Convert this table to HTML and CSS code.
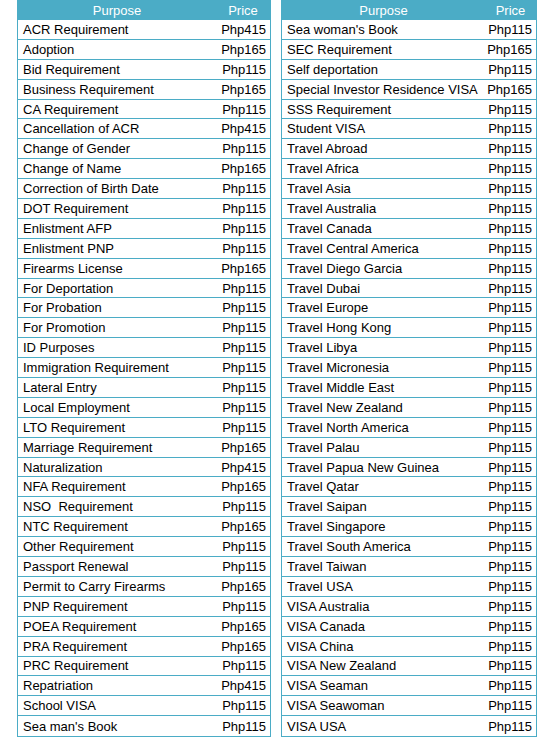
FILE: index.html
```html
<!DOCTYPE html>
<html>
<head>
<meta charset="utf-8">
<link rel="stylesheet" href="styles.css">
</head>
<body>
<div class="wrap">
  <div class="tbl left">
    <div class="row head"><span class="p">Purpose</span><span class="c">Price</span></div>
    <div class="row"><span class="p">ACR Requirement</span><span class="c">Php415</span></div>
    <div class="row"><span class="p">Adoption</span><span class="c">Php165</span></div>
    <div class="row"><span class="p">Bid Requirement</span><span class="c">Php115</span></div>
    <div class="row"><span class="p">Business Requirement</span><span class="c">Php165</span></div>
    <div class="row"><span class="p">CA Requirement</span><span class="c">Php115</span></div>
    <div class="row"><span class="p">Cancellation of ACR</span><span class="c">Php415</span></div>
    <div class="row"><span class="p">Change of Gender</span><span class="c">Php115</span></div>
    <div class="row"><span class="p">Change of Name</span><span class="c">Php165</span></div>
    <div class="row"><span class="p">Correction of Birth Date</span><span class="c">Php115</span></div>
    <div class="row"><span class="p">DOT Requirement</span><span class="c">Php115</span></div>
    <div class="row"><span class="p">Enlistment AFP</span><span class="c">Php115</span></div>
    <div class="row"><span class="p">Enlistment PNP</span><span class="c">Php115</span></div>
    <div class="row"><span class="p">Firearms License</span><span class="c">Php165</span></div>
    <div class="row"><span class="p">For Deportation</span><span class="c">Php115</span></div>
    <div class="row"><span class="p">For Probation</span><span class="c">Php115</span></div>
    <div class="row"><span class="p">For Promotion</span><span class="c">Php115</span></div>
    <div class="row"><span class="p">ID Purposes</span><span class="c">Php115</span></div>
    <div class="row"><span class="p">Immigration Requirement</span><span class="c">Php115</span></div>
    <div class="row"><span class="p">Lateral Entry</span><span class="c">Php115</span></div>
    <div class="row"><span class="p">Local Employment</span><span class="c">Php115</span></div>
    <div class="row"><span class="p">LTO Requirement</span><span class="c">Php115</span></div>
    <div class="row"><span class="p">Marriage Requirement</span><span class="c">Php165</span></div>
    <div class="row"><span class="p">Naturalization</span><span class="c">Php415</span></div>
    <div class="row"><span class="p">NFA Requirement</span><span class="c">Php165</span></div>
    <div class="row"><span class="p">NSO &nbsp;Requirement</span><span class="c">Php115</span></div>
    <div class="row"><span class="p">NTC Requirement</span><span class="c">Php165</span></div>
    <div class="row"><span class="p">Other Requirement</span><span class="c">Php115</span></div>
    <div class="row"><span class="p">Passport Renewal</span><span class="c">Php115</span></div>
    <div class="row"><span class="p">Permit to Carry Firearms</span><span class="c">Php165</span></div>
    <div class="row"><span class="p">PNP Requirement</span><span class="c">Php115</span></div>
    <div class="row"><span class="p">POEA Requirement</span><span class="c">Php165</span></div>
    <div class="row"><span class="p">PRA Requirement</span><span class="c">Php165</span></div>
    <div class="row"><span class="p">PRC Requirement</span><span class="c">Php115</span></div>
    <div class="row"><span class="p">Repatriation</span><span class="c">Php415</span></div>
    <div class="row"><span class="p">School VISA</span><span class="c">Php115</span></div>
    <div class="row"><span class="p">Sea man's Book</span><span class="c">Php115</span></div>
  </div>
  <div class="tbl right">
    <div class="row head"><span class="p">Purpose</span><span class="c">Price</span></div>
    <div class="row"><span class="p">Sea woman's Book</span><span class="c">Php115</span></div>
    <div class="row"><span class="p">SEC Requirement</span><span class="c">Php165</span></div>
    <div class="row"><span class="p">Self deportation</span><span class="c">Php115</span></div>
    <div class="row"><span class="p">Special Investor Residence VISA</span><span class="c">Php165</span></div>
    <div class="row"><span class="p">SSS Requirement</span><span class="c">Php115</span></div>
    <div class="row"><span class="p">Student VISA</span><span class="c">Php115</span></div>
    <div class="row"><span class="p">Travel Abroad</span><span class="c">Php115</span></div>
    <div class="row"><span class="p">Travel Africa</span><span class="c">Php115</span></div>
    <div class="row"><span class="p">Travel Asia</span><span class="c">Php115</span></div>
    <div class="row"><span class="p">Travel Australia</span><span class="c">Php115</span></div>
    <div class="row"><span class="p">Travel Canada</span><span class="c">Php115</span></div>
    <div class="row"><span class="p">Travel Central America</span><span class="c">Php115</span></div>
    <div class="row"><span class="p">Travel Diego Garcia</span><span class="c">Php115</span></div>
    <div class="row"><span class="p">Travel Dubai</span><span class="c">Php115</span></div>
    <div class="row"><span class="p">Travel Europe</span><span class="c">Php115</span></div>
    <div class="row"><span class="p">Travel Hong Kong</span><span class="c">Php115</span></div>
    <div class="row"><span class="p">Travel Libya</span><span class="c">Php115</span></div>
    <div class="row"><span class="p">Travel Micronesia</span><span class="c">Php115</span></div>
    <div class="row"><span class="p">Travel Middle East</span><span class="c">Php115</span></div>
    <div class="row"><span class="p">Travel New Zealand</span><span class="c">Php115</span></div>
    <div class="row"><span class="p">Travel North America</span><span class="c">Php115</span></div>
    <div class="row"><span class="p">Travel Palau</span><span class="c">Php115</span></div>
    <div class="row"><span class="p">Travel Papua New Guinea</span><span class="c">Php115</span></div>
    <div class="row"><span class="p">Travel Qatar</span><span class="c">Php115</span></div>
    <div class="row"><span class="p">Travel Saipan</span><span class="c">Php115</span></div>
    <div class="row"><span class="p">Travel Singapore</span><span class="c">Php115</span></div>
    <div class="row"><span class="p">Travel South America</span><span class="c">Php115</span></div>
    <div class="row"><span class="p">Travel Taiwan</span><span class="c">Php115</span></div>
    <div class="row"><span class="p">Travel USA</span><span class="c">Php115</span></div>
    <div class="row"><span class="p">VISA Australia</span><span class="c">Php115</span></div>
    <div class="row"><span class="p">VISA Canada</span><span class="c">Php115</span></div>
    <div class="row"><span class="p">VISA China</span><span class="c">Php115</span></div>
    <div class="row"><span class="p">VISA New Zealand</span><span class="c">Php115</span></div>
    <div class="row"><span class="p">VISA Seaman</span><span class="c">Php115</span></div>
    <div class="row"><span class="p">VISA Seawoman</span><span class="c">Php115</span></div>
    <div class="row"><span class="p">VISA USA</span><span class="c">Php115</span></div>
  </div>
</div>
</body>
</html>
```
FILE: styles.css
```css
html, body {
  margin: 0;
  padding: 0;
  background: #ffffff;
}
body {
  font-family: "Liberation Sans", Arial, sans-serif;
  font-size: 13px;
  color: #000000;
}
.wrap {
  display: flex;
  gap: 10px;
  padding-left: 17px;
  align-items: flex-start;
}
.tbl {
  border: 1px solid #4bacc6;
  border-top: none;
  box-sizing: border-box;
}
.left { width: 254px; }
.right { width: 256px; }
.row {
  display: flex;
  align-items: center;
  height: 19.9px;
  box-sizing: border-box;
  border-bottom: 1px solid #4bacc6;
  padding: 0 4px 0 5px;
  white-space: nowrap;
}
.row:last-child { border-bottom: none; }
.row .p { flex: 1; }
.row .c { text-align: right; }
.row.head {
  height: 20px;
  background: #4bacc6;
  color: #ffffff;
  border-bottom: none;
  padding: 0;
}
.left .head .p { width: 198px; flex: none; text-align: center; }
.left .head .c { flex: 1; text-align: center; }
.right .head .p { width: 203px; flex: none; text-align: center; }
.right .head .c { flex: 1; text-align: center; }
```
